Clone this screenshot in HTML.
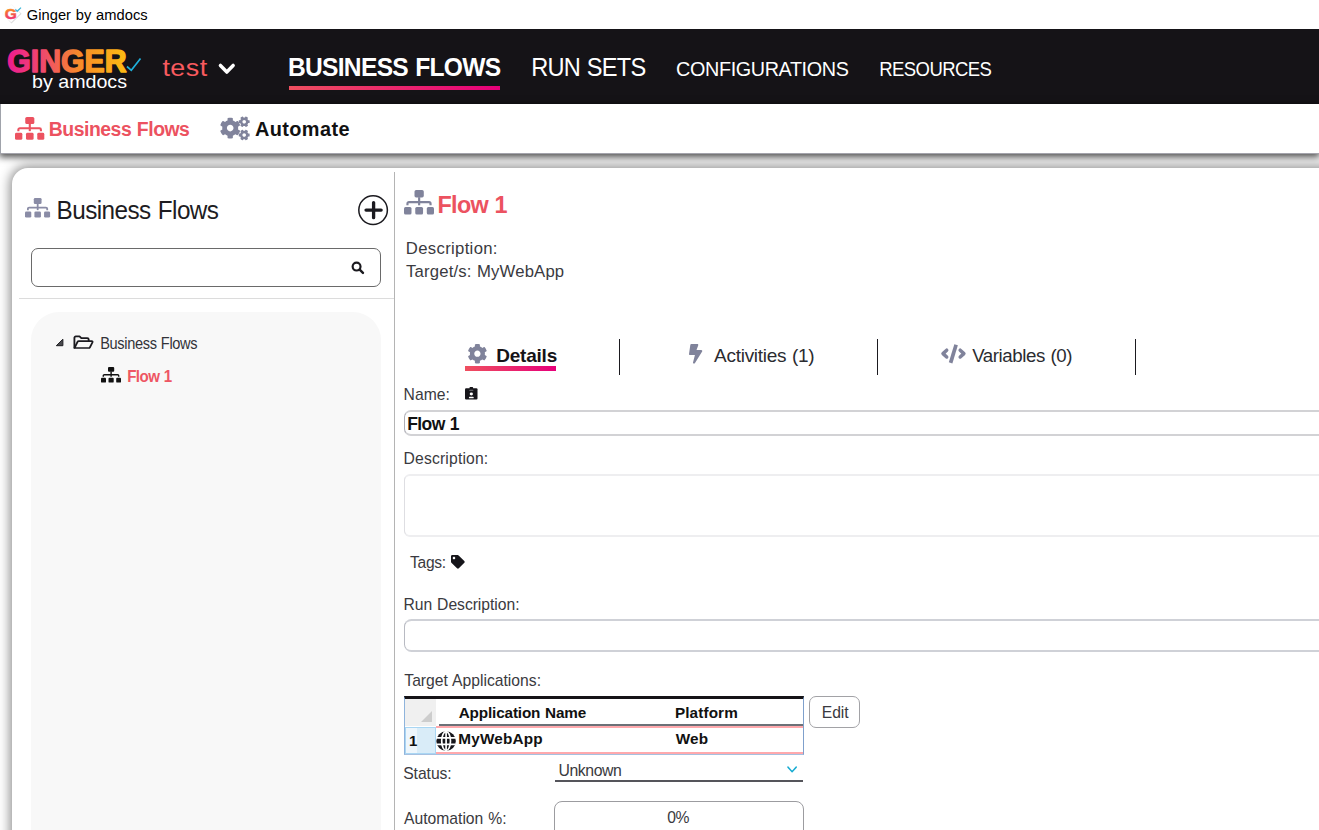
<!DOCTYPE html>
<html lang="en">
<head>
<meta charset="utf-8">
<title>Ginger by amdocs</title>
<style>
*{box-sizing:border-box;margin:0;padding:0}
html,body{width:1319px;height:830px;overflow:hidden;background:#fff}
body{position:relative;font-family:"Liberation Sans","DejaVu Sans",sans-serif;color:#222}
.abs{position:absolute;white-space:nowrap;line-height:1}
.box{position:absolute}
svg{position:absolute;overflow:visible}
#titlebar{left:0;top:0;width:1319px;height:29px;background:#fff}
#hdr{left:0;top:29px;width:1319px;height:75px;background:#151317}
#navline{left:289px;top:86px;width:211px;height:4px;background:linear-gradient(90deg,#ef4f5f,#e6007a)}
#tool{left:0;top:104px;width:1319px;height:49.5px;background:#fff;border-left:1.5px solid #a0a3ab;border-bottom:1.5px solid #a4a4ac;box-shadow:0 2px 7px 1px rgba(0,0,0,.7)}
#panel{left:12px;top:168px;width:1330px;height:700px;background:#fff;border-top-left-radius:16px;box-shadow:0 0 12px 2px rgba(0,0,0,.46)}
#vdiv{left:393.5px;top:172px;width:1.5px;height:660px;background:#b4b4b4}
#hline{left:19px;top:297.6px;width:375px;height:1.3px;background:#dcdcdc}
#search{left:31px;top:248px;width:349.8px;height:38.5px;border:1.2px solid #6a6a6a;border-radius:7px;background:#fff}
#tree{left:31px;top:311.5px;width:350px;height:560px;background:#f8f8f8;border-radius:28px}
  .tabdiv{top:338.5px;width:1.4px;height:36px;background:#1b1a1f}
#tabline{left:465px;top:366.3px;width:91.3px;height:5px;background:linear-gradient(90deg,#ef4f5f,#e6007a)}
.inp{border-radius:6px;background:#fff}
#in_name{left:404px;top:410px;width:940px;height:26px;border:2px solid #d2d2d5;border-left:1px solid #aeaeb6;border-radius:7px}
#in_desc{left:404px;top:474px;width:940px;height:63px;border:2px solid #eeeef0;border-left:1px solid #dedee2;border-radius:6px}
#in_run{left:404px;top:619px;width:940px;height:33px;border:2px solid #cfd1d7;border-left:1px solid #b8bac2;border-radius:7.5px}
#grid{left:404px;top:696.2px;width:399.8px;height:58.8px;background:#fff;border-left:1px solid #8fb4dc;border-right:1px solid #7fa0cc;border-bottom:1.2px solid #a6c0e0;border-top:3px solid #151317}
#g_corner{left:405px;top:699.2px;width:31px;height:27px;background:#f0f0f0}
#g_tri{left:420.6px;top:710.8px;width:0;height:0;border-left:11.7px solid transparent;border-bottom:11.5px solid #cdcdcd}
#g_hline{left:439px;top:724.1px;width:363.5px;height:1.8px;background:#6c7177}
#g_p1{left:436px;top:725.9px;width:366.5px;height:2px;background:#ffa9ad}
#g_p2{left:436px;top:751.8px;width:366.5px;height:1.8px;background:#ffa9ad}
#g_rowh{left:405px;top:727.3px;width:31.3px;height:26.5px;background:linear-gradient(90deg,#eef6fc 38%,#d9ecf8 38%);border:1px solid #a9d6f3}
#btn_edit{left:809.3px;top:696.2px;width:50.8px;height:32px;border:1px solid #a2a2a6;border-radius:7px;background:#fff}
#cb_line{left:555px;top:780px;width:247.5px;height:2px;background:#55555b}
#in_auto{left:554px;top:800.8px;width:250px;height:40px;border:1.2px solid #9c9ca0;border-radius:8px;background:#fff}
</style>
</head>
<body>
<!-- window title bar -->
<div class="box" id="titlebar"></div>
<svg style="left:0;top:0" width="26" height="29" viewBox="0 0 26 29"><defs><linearGradient id="tg" x1="0" y1="0" x2="0" y2="1"><stop offset="0" stop-color="#fcb013"/><stop offset=".45" stop-color="#f4653f"/><stop offset="1" stop-color="#ec1690"/></linearGradient><linearGradient id="td" x1="0" y1="0" x2="1" y2="1"><stop offset="0" stop-color="#fff"/><stop offset=".55" stop-color="#f4f4f4"/><stop offset="1" stop-color="#b9b9b9"/></linearGradient></defs><path d="M11.5 4 21.6 13.8 11.5 23.6 1.8 13.8z" fill="url(#td)"/><path d="M11.2 4.8 20.3 13.6 11.2 22.3 2.6 13.6z" fill="#fff"/><text x="4.7" y="19.3" font-family='"Liberation Sans",sans-serif' font-weight="700" font-size="15.5" fill="url(#tg)" stroke="url(#tg)" stroke-width=".5">G</text><path d="M15.3 9.6 17.2 11.3 21 7.6" fill="none" stroke="#3db7d9" stroke-width="1.3"/></svg>
<!-- dark application header -->
<div class="box" id="hdr"></div>
<svg style="left:0;top:29px" width="160" height="75" viewBox="0 0 160 75"><defs><linearGradient id="lg" gradientUnits="userSpaceOnUse" x1="8" y1="0" x2="126" y2="0"><stop offset="0" stop-color="#ed1c8f"/><stop offset=".3" stop-color="#f04a6c"/><stop offset=".6" stop-color="#f68a2a"/><stop offset="1" stop-color="#fdbb12"/></linearGradient></defs>
<text id="logo1" x="7.2" y="43" font-family='"Liberation Sans",sans-serif' font-weight="700" font-size="32" textLength="119.5" lengthAdjust="spacingAndGlyphs" fill="url(#lg)" stroke="url(#lg)" stroke-width="1.5" stroke-linejoin="round">GINGER</text>
<path d="M127 37.5 131.3 41.3 140.5 29.5" fill="none" stroke="#1fb0dc" stroke-width="1.7"/>
<text id="logo2" x="32" y="59" font-family='"Liberation Sans",sans-serif' font-size="18.5" textLength="95" lengthAdjust="spacingAndGlyphs" fill="#fff">by amdocs</text></svg>
<svg style="left:218.7px;top:63.5px" width="15.6" height="9.6" viewBox="0 0 16 9.5" preserveAspectRatio="none"><path d="M1.5 1.5 8 8 14.5 1.5" fill="none" stroke="#fff" stroke-width="3.6" stroke-linecap="round" stroke-linejoin="round"/></svg>
<div class="box" id="navline"></div>
<!-- main panel -->
<div class="box" id="panel"></div>
<!-- toolbar -->
<div class="box" id="tool"></div>
<svg style="left:15px;top:117px" width="29.3" height="22.8" viewBox="0 0 100 82" preserveAspectRatio="none"><g fill="#ec5260"><rect x="35" y="0" width="31" height="25" rx="5.5"/><rect x="0" y="57" width="25" height="25" rx="5"/><rect x="37.5" y="57" width="26" height="25" rx="5"/><rect x="76" y="57" width="24" height="25" rx="5"/></g><g fill="none" stroke="#ec5260" stroke-width="7.2" stroke-linecap="butt"><path d="M50.5 24V51"/><path d="M11.5 51V45.5a5 5 0 0 1 5-5H83.5a5 5 0 0 1 5 5V51"/></g></svg>
<svg style="left:220.2px;top:116.1px" width="30" height="24" viewBox="0 0 30 24" preserveAspectRatio="none"><path transform="translate(10.2 12.1) rotate(0) scale(0.04153) translate(-256 -256)" d="M487.4 315.7l-42.6-24.6c4.3-23.2 4.3-47 0-70.2l42.6-24.6c4.9-2.8 7.1-8.6 5.5-14-11.1-35.6-30-67.8-54.7-94.6-3.8-4.1-10-5.1-14.8-2.3L380.8 110c-17.9-15.4-38.5-27.3-60.8-35.1V25.8c0-5.6-3.9-10.5-9.4-11.7-36.7-8.2-74.3-7.8-109.2 0-5.5 1.2-9.4 6.1-9.4 11.7V75c-22.2 7.9-42.8 19.8-60.8 35.1L88.7 85.5c-4.9-2.8-11-1.9-14.8 2.3-24.7 26.7-43.6 58.9-54.7 94.6-1.7 5.4.6 11.2 5.5 14L67.3 221c-4.3 23.2-4.3 47 0 70.2l-42.6 24.6c-4.9 2.8-7.1 8.6-5.5 14 11.1 35.6 30 67.8 54.7 94.6 3.8 4.1 10 5.1 14.8 2.3l42.6-24.6c17.9 15.4 38.5 27.3 60.8 35.1v49.2c0 5.6 3.9 10.5 9.4 11.7 36.7 8.2 74.3 7.8 109.2 0 5.5-1.2 9.4-6.1 9.4-11.7v-49.2c22.2-7.9 42.8-19.8 60.8-35.1l42.6 24.6c4.9 2.8 11 1.9 14.8-2.3 24.7-26.7 43.6-58.9 54.7-94.6 1.5-5.5-.7-11.3-5.6-14.1zM256 336c-44.1 0-80-35.9-80-80s35.9-80 80-80 80 35.9 80 80-35.9 80-80 80z" fill="#80839b" fill-rule="evenodd"/><path transform="translate(24.2 5.7) rotate(90) scale(0.02218) translate(-256 -256)" d="M487.4 315.7l-42.6-24.6c4.3-23.2 4.3-47 0-70.2l42.6-24.6c4.9-2.8 7.1-8.6 5.5-14-11.1-35.6-30-67.8-54.7-94.6-3.8-4.1-10-5.1-14.8-2.3L380.8 110c-17.9-15.4-38.5-27.3-60.8-35.1V25.8c0-5.6-3.9-10.5-9.4-11.7-36.7-8.2-74.3-7.8-109.2 0-5.5 1.2-9.4 6.1-9.4 11.7V75c-22.2 7.9-42.8 19.8-60.8 35.1L88.7 85.5c-4.9-2.8-11-1.9-14.8 2.3-24.7 26.7-43.6 58.9-54.7 94.6-1.7 5.4.6 11.2 5.5 14L67.3 221c-4.3 23.2-4.3 47 0 70.2l-42.6 24.6c-4.9 2.8-7.1 8.6-5.5 14 11.1 35.6 30 67.8 54.7 94.6 3.8 4.1 10 5.1 14.8 2.3l42.6-24.6c17.9 15.4 38.5 27.3 60.8 35.1v49.2c0 5.6 3.9 10.5 9.4 11.7 36.7 8.2 74.3 7.8 109.2 0 5.5-1.2 9.4-6.1 9.4-11.7v-49.2c22.2-7.9 42.8-19.8 60.8-35.1l42.6 24.6c4.9 2.8 11 1.9 14.8-2.3 24.7-26.7 43.6-58.9 54.7-94.6 1.5-5.5-.7-11.3-5.6-14.1zM256 336c-44.1 0-80-35.9-80-80s35.9-80 80-80 80 35.9 80 80-35.9 80-80 80z" fill="#80839b" fill-rule="evenodd"/><path transform="translate(24.2 19) rotate(90) scale(0.02218) translate(-256 -256)" d="M487.4 315.7l-42.6-24.6c4.3-23.2 4.3-47 0-70.2l42.6-24.6c4.9-2.8 7.1-8.6 5.5-14-11.1-35.6-30-67.8-54.7-94.6-3.8-4.1-10-5.1-14.8-2.3L380.8 110c-17.9-15.4-38.5-27.3-60.8-35.1V25.8c0-5.6-3.9-10.5-9.4-11.7-36.7-8.2-74.3-7.8-109.2 0-5.5 1.2-9.4 6.1-9.4 11.7V75c-22.2 7.9-42.8 19.8-60.8 35.1L88.7 85.5c-4.9-2.8-11-1.9-14.8 2.3-24.7 26.7-43.6 58.9-54.7 94.6-1.7 5.4.6 11.2 5.5 14L67.3 221c-4.3 23.2-4.3 47 0 70.2l-42.6 24.6c-4.9 2.8-7.1 8.6-5.5 14 11.1 35.6 30 67.8 54.7 94.6 3.8 4.1 10 5.1 14.8 2.3l42.6-24.6c17.9 15.4 38.5 27.3 60.8 35.1v49.2c0 5.6 3.9 10.5 9.4 11.7 36.7 8.2 74.3 7.8 109.2 0 5.5-1.2 9.4-6.1 9.4-11.7v-49.2c22.2-7.9 42.8-19.8 60.8-35.1l42.6 24.6c4.9 2.8 11 1.9 14.8-2.3 24.7-26.7 43.6-58.9 54.7-94.6 1.5-5.5-.7-11.3-5.6-14.1zM256 336c-44.1 0-80-35.9-80-80s35.9-80 80-80 80 35.9 80 80-35.9 80-80 80z" fill="#80839b" fill-rule="evenodd"/></svg>
<div class="box" id="vdiv"></div>
<div class="box" id="hline"></div>
<svg style="left:24.8px;top:198.3px" width="25.1" height="19.5" viewBox="0 0 100 82" preserveAspectRatio="none"><g fill="#8a8ca6"><rect x="35" y="0" width="31" height="25" rx="5.5"/><rect x="0" y="57" width="25" height="25" rx="5"/><rect x="37.5" y="57" width="26" height="25" rx="5"/><rect x="76" y="57" width="24" height="25" rx="5"/></g><g fill="none" stroke="#8a8ca6" stroke-width="7.2" stroke-linecap="butt"><path d="M50.5 24V51"/><path d="M11.5 51V45.5a5 5 0 0 1 5-5H83.5a5 5 0 0 1 5 5V51"/></g></svg>
<svg style="left:357.8px;top:194.8px" width="30.2" height="30.2" viewBox="0 0 30 30" ><circle cx="15" cy="15" r="14.2" fill="#fff" stroke="#1b1a1f" stroke-width="1.5"/><path d="M8 15H23M15.5 7.5V22.5" stroke="#1b1a1f" stroke-width="3.3" stroke-linecap="round"/></svg>
<div class="box" id="search"></div>
<svg style="left:351.2px;top:260.6px" width="13.6" height="13.6" viewBox="0 0 20 20" ><circle cx="8.2" cy="8.2" r="5.8" fill="none" stroke="#1b1a1f" stroke-width="3.2"/><path d="M12.8 12.8 17.6 17.6" stroke="#1b1a1f" stroke-width="3.6" stroke-linecap="round"/></svg>
<div class="box" id="tree"></div>
<svg style="left:55px;top:338.4px" width="8.4" height="8.2" viewBox="0 0 8.4 8.2"><path d="M7.9 1.2V7.7H1.3z" fill="#4a4a4e" stroke="#1f1f23" stroke-width="1" stroke-linejoin="round"/></svg>
<svg style="left:73.3px;top:335.3px" width="20.5" height="14.4" viewBox="0 0 29 22" preserveAspectRatio="none"><g fill="none" stroke="#1b1a1f" stroke-width="2.6" stroke-linejoin="round" stroke-linecap="round"><path d="M2 19.5V4.2a2 2 0 0 1 2-2h5.2l2.6 2.6h8.4a2 2 0 0 1 2 2v2.4"/><path d="M2.2 19.8 6.4 10.6a2 2 0 0 1 1.8-1.2h18.3a1.2 1.2 0 0 1 1.1 1.7l-3.7 7.7a2 2 0 0 1-1.8 1.1H2.6"/></g></svg>
<svg style="left:101.2px;top:367.2px" width="20" height="15.6" viewBox="0 0 100 82" preserveAspectRatio="none"><g fill="#111"><rect x="35" y="0" width="31" height="25" rx="5.5"/><rect x="0" y="57" width="25" height="25" rx="5"/><rect x="37.5" y="57" width="26" height="25" rx="5"/><rect x="76" y="57" width="24" height="25" rx="5"/></g><g fill="none" stroke="#111" stroke-width="7.2" stroke-linecap="butt"><path d="M50.5 24V51"/><path d="M11.5 51V45.5a5 5 0 0 1 5-5H83.5a5 5 0 0 1 5 5V51"/></g></svg>
<!-- details -->
<svg style="left:403.7px;top:189.7px" width="30" height="24.6" viewBox="0 0 100 82" preserveAspectRatio="none"><g fill="#80839b"><rect x="35" y="0" width="31" height="25" rx="5.5"/><rect x="0" y="57" width="25" height="25" rx="5"/><rect x="37.5" y="57" width="26" height="25" rx="5"/><rect x="76" y="57" width="24" height="25" rx="5"/></g><g fill="none" stroke="#80839b" stroke-width="7.2" stroke-linecap="butt"><path d="M50.5 24V51"/><path d="M11.5 51V45.5a5 5 0 0 1 5-5H83.5a5 5 0 0 1 5 5V51"/></g></svg>
<svg style="left:468.2px;top:344.2px" width="18.8" height="19.4" viewBox="16 8 480 496" preserveAspectRatio="none"><path d="M487.4 315.7l-42.6-24.6c4.3-23.2 4.3-47 0-70.2l42.6-24.6c4.9-2.8 7.1-8.6 5.5-14-11.1-35.6-30-67.8-54.7-94.6-3.8-4.1-10-5.1-14.8-2.3L380.8 110c-17.9-15.4-38.5-27.3-60.8-35.1V25.8c0-5.6-3.9-10.5-9.4-11.7-36.7-8.2-74.3-7.8-109.2 0-5.5 1.2-9.4 6.1-9.4 11.7V75c-22.2 7.9-42.8 19.8-60.8 35.1L88.7 85.5c-4.9-2.8-11-1.9-14.8 2.3-24.7 26.7-43.6 58.9-54.7 94.6-1.7 5.4.6 11.2 5.5 14L67.3 221c-4.3 23.2-4.3 47 0 70.2l-42.6 24.6c-4.9 2.8-7.1 8.6-5.5 14 11.1 35.6 30 67.8 54.7 94.6 3.8 4.1 10 5.1 14.8 2.3l42.6-24.6c17.9 15.4 38.5 27.3 60.8 35.1v49.2c0 5.6 3.9 10.5 9.4 11.7 36.7 8.2 74.3 7.8 109.2 0 5.5-1.2 9.4-6.1 9.4-11.7v-49.2c22.2-7.9 42.8-19.8 60.8-35.1l42.6 24.6c4.9 2.8 11 1.9 14.8-2.3 24.7-26.7 43.6-58.9 54.7-94.6 1.5-5.5-.7-11.3-5.6-14.1zM256 336c-44.1 0-80-35.9-80-80s35.9-80 80-80 80 35.9 80 80-35.9 80-80 80z" fill="#80839b" fill-rule="evenodd"/></svg>
<div class="box" id="tabline"></div>
<div class="box tabdiv" style="left:618.9px"></div>
<div class="box tabdiv" style="left:876.7px"></div>
<div class="box tabdiv" style="left:1134.5px"></div>
<svg style="left:688.7px;top:344px" width="13.3" height="19.6" viewBox="0 0 320 512" preserveAspectRatio="none"><path d="M296 160H180.6l42.6-129.8C227.2 15 215.7 0 200 0H56C44 0 33.8 8.9 32.2 20.8l-32 240C-1.7 275.2 9.5 288 24 288h118.7L96.6 482.5c-3.6 15.2 8 29.5 23.3 29.5 8.4 0 16.4-4.4 20.8-12l176-304c9.3-15.9-2.2-36-20.7-36z" fill="#80839b"/></svg>
<svg style="left:941px;top:344.2px" width="24.9" height="19.6" viewBox="0 0 24.9 19.6" ><g fill="none" stroke="#80839b" stroke-width="3.5" stroke-linecap="round" stroke-linejoin="round"><path d="M5.7 6.2 2 9.6 5.7 13"/><path d="M19.2 6.2 22.9 9.6 19.2 13"/></g><path d="M15.1 .7 9.6 18.9" stroke="#80839b" stroke-width="3.7" stroke-linecap="butt" fill="none"/></svg>
<svg style="left:464.6px;top:387.3px" width="12.5" height="12.6" viewBox="0 0 20 22" preserveAspectRatio="none"><rect x="0" y="2.3" width="20" height="19.7" rx="1.8" fill="#16151a"/><rect x="7.2" y="0" width="5.8" height="4" rx="1.2" fill="#16151a"/><rect x="6.8" y="5" width="6.6" height="1.7" rx=".8" fill="#77777c"/><circle cx="10.1" cy="12.3" r="2.6" fill="#fff"/><rect x="6.3" y="17" width="7.6" height="2.6" rx="1" fill="#fff"/></svg>
<div class="box inp" id="in_name"></div>
<div class="box inp" id="in_desc"></div>
<svg style="left:450.8px;top:554.7px" width="13.7" height="13.7" viewBox="0 0 512 512" ><path d="M0 252.118V48C0 21.49 21.49 0 48 0h204.118a48 48 0 0 1 33.941 14.059l211.882 211.882c18.745 18.745 18.745 49.137 0 67.882L293.823 497.941c-18.745 18.745-49.137 18.745-67.882 0L14.059 286.059A48 48 0 0 1 0 252.118zM112 64c-26.51 0-48 21.49-48 48s21.49 48 48 48 48-21.49 48-48-21.49-48-48-48z" fill="#16151a" fill-rule="evenodd"/></svg>
<div class="box inp" id="in_run"></div>
<div class="box" id="grid"></div>
<div class="box" id="g_corner"></div><div class="box" id="g_tri"></div>
<div class="box" id="g_hline"></div><div class="box" id="g_p1"></div><div class="box" id="g_p2"></div>
<div class="box" id="g_rowh"></div>
<svg style="left:436.2px;top:730.5px" width="20.2" height="20.2" viewBox="0 0 24 24" ><circle cx="12" cy="12" r="11.6" fill="#16151a"/><g fill="none" stroke="#fff" stroke-width="2"><ellipse cx="12" cy="12" rx="5.2" ry="11.2"/><path d="M12 .5v23"/><path d="M.5 8.2h23M.5 15.8h23"/></g></svg>
<div class="box" id="btn_edit"></div>
<div class="box" id="cb_line"></div>
<svg style="left:787.3px;top:765.6px" width="10.2" height="6.8" viewBox="0 0 16 9.5" preserveAspectRatio="none"><path d="M1.5 1.5 8 8 14.5 1.5" fill="none" stroke="#18acd2" stroke-width="2.3" stroke-linecap="round" stroke-linejoin="round"/></svg>
<div class="box" id="in_auto"></div>
<!-- text -->
<div class="abs" id="t_title" style="left:26.77px;top:8px;font-size:14.7px;font-weight:400;color:#000;letter-spacing:0.033px;word-spacing:0.59px">Ginger by amdocs</div>
<div class="abs" id="t_test" style="left:162.46px;top:54px;font-size:26.9px;font-weight:400;color:#f85a5e;letter-spacing:0.442px;transform:scaleY(0.886);transform-origin:0 22px">test</div>
<div class="abs" id="t_bf" style="left:287.88px;top:56px;font-size:24.6px;font-weight:700;color:#fff;letter-spacing:-0.695px;word-spacing:0.98px;transform:scaleY(1.04);transform-origin:0 20px">BUSINESS FLOWS</div>
<div class="abs" id="t_rs" style="left:531.35px;top:57px;font-size:23.6px;font-weight:400;color:#fff;letter-spacing:-0.776px;word-spacing:0.94px;transform:scaleY(1.084);transform-origin:0 19px">RUN SETS</div>
<div class="abs" id="t_cf" style="left:676.11px;top:60px;font-size:19.8px;font-weight:400;color:#fff;letter-spacing:-0.381px">CONFIGURATIONS</div>
<div class="abs" id="t_rc" style="left:879.21px;top:61px;font-size:18.5px;font-weight:400;color:#fff;letter-spacing:-0.558px;transform:scaleY(1.069);transform-origin:0 15px">RESOURCES</div>
<div class="abs" id="t_tbf" style="left:48.84px;top:120px;font-size:19.4px;font-weight:700;color:#ec5260;letter-spacing:-0.482px;word-spacing:0.78px">Business Flows</div>
<div class="abs" id="t_auto" style="left:255px;top:120px;font-size:19.9px;font-weight:700;color:#111;letter-spacing:0.39px">Automate</div>
<div class="abs" id="t_pbf" style="left:56.6px;top:199px;font-size:24.3px;font-weight:400;color:#1d1c22;letter-spacing:-0.566px;word-spacing:0.97px;transform:scaleY(1.071);transform-origin:0 20px">Business Flows</div>
<div class="abs" id="t_trbf" style="left:100.18px;top:337px;font-size:14.6px;font-weight:400;color:#333338;letter-spacing:-0.35px;word-spacing:0.58px;transform:scaleY(1.105);transform-origin:0 12px">Business Flows</div>
<div class="abs" id="t_trf" style="left:127.14px;top:369px;font-size:15.1px;font-weight:700;color:#ee5663;letter-spacing:-0.494px;word-spacing:0.6px;transform:scaleY(1.049);transform-origin:0 13px">Flow 1</div>
<div class="abs" id="t_hf" style="left:437.56px;top:194px;font-size:23.4px;font-weight:700;color:#ec5260;letter-spacing:-0.727px;word-spacing:0.94px;transform:scaleY(1.044);transform-origin:0 19px">Flow 1</div>
<div class="abs" id="t_hd" style="left:405.83px;top:241px;font-size:16.7px;font-weight:400;color:#3a3a40;letter-spacing:0.321px">Description:</div>
<div class="abs" id="t_ht" style="left:406.07px;top:264px;font-size:16.7px;font-weight:400;color:#3a3a40;letter-spacing:0.165px;word-spacing:0.67px">Target/s: MyWebApp</div>
<div class="abs" id="t_det" style="left:496.27px;top:346px;font-size:19px;font-weight:700;color:#151317;letter-spacing:-0.221px">Details</div>
<div class="abs" id="t_act" style="left:714.12px;top:346px;font-size:19px;font-weight:400;color:#2b2b30;letter-spacing:-0.284px;word-spacing:0.76px">Activities (1)</div>
<div class="abs" id="t_var" style="left:972.13px;top:347px;font-size:18.7px;font-weight:400;color:#2b2b30;letter-spacing:-0.405px;word-spacing:0.75px">Variables (0)</div>
<div class="abs" id="t_name" style="left:403.5px;top:387px;font-size:15.7px;font-weight:400;color:#3a3a40;letter-spacing:0.061px">Name:</div>
<div class="abs" id="t_nf" style="left:407.17px;top:416px;font-size:17.5px;font-weight:700;color:#111;letter-spacing:-0.55px;word-spacing:0.7px;transform:scaleY(1.055);transform-origin:0 14px">Flow 1</div>
<div class="abs" id="t_desc" style="left:403.5px;top:451px;font-size:15.7px;font-weight:400;color:#3a3a40;letter-spacing:0.172px">Description:</div>
<div class="abs" id="t_tags" style="left:410.09px;top:555px;font-size:15.6px;font-weight:400;color:#3a3a40;letter-spacing:-0.324px">Tags:</div>
<div class="abs" id="t_rd" style="left:403.5px;top:597px;font-size:15.7px;font-weight:400;color:#3a3a40;letter-spacing:-0.04px;word-spacing:0.63px">Run Description:</div>
<div class="abs" id="t_ta" style="left:404.29px;top:673px;font-size:15.7px;font-weight:400;color:#3a3a40;letter-spacing:0.003px;word-spacing:0.63px">Target Applications:</div>
<div class="abs" id="t_an" style="left:458.69px;top:705px;font-size:15.3px;font-weight:700;color:#111;letter-spacing:-0.151px;word-spacing:0.61px">Application Name</div>
<div class="abs" id="t_pl" style="left:674.93px;top:705px;font-size:15.3px;font-weight:700;color:#111;letter-spacing:0.111px">Platform</div>
<div class="abs" id="t_one" style="left:408.9px;top:733px;font-size:15px;font-weight:700;color:#111;letter-spacing:0px">1</div>
<div class="abs" id="t_mw" style="left:458.33px;top:731px;font-size:15.3px;font-weight:700;color:#111;letter-spacing:0.189px">MyWebApp</div>
<div class="abs" id="t_web" style="left:675.69px;top:731px;font-size:15.3px;font-weight:700;color:#111;letter-spacing:0.176px">Web</div>
<div class="abs" id="t_edit" style="left:821.8px;top:705px;font-size:15.7px;font-weight:400;color:#3a3a40;letter-spacing:-0.056px">Edit</div>
<div class="abs" id="t_st" style="left:403.2px;top:766px;font-size:15.7px;font-weight:400;color:#3a3a40;letter-spacing:-0.048px">Status:</div>
<div class="abs" id="t_unk" style="left:558.39px;top:763px;font-size:15.8px;font-weight:400;color:#3a3a40;letter-spacing:-0.396px">Unknown</div>
<div class="abs" id="t_au" style="left:403.99px;top:811px;font-size:15.7px;font-weight:400;color:#3a3a40;letter-spacing:-0.003px;word-spacing:0.63px">Automation %:</div>
<div class="abs" id="t_zero" style="left:667.3px;top:810px;font-size:15.7px;font-weight:400;color:#3a3a40;letter-spacing:-0.507px">0%</div>
</body>
</html>
